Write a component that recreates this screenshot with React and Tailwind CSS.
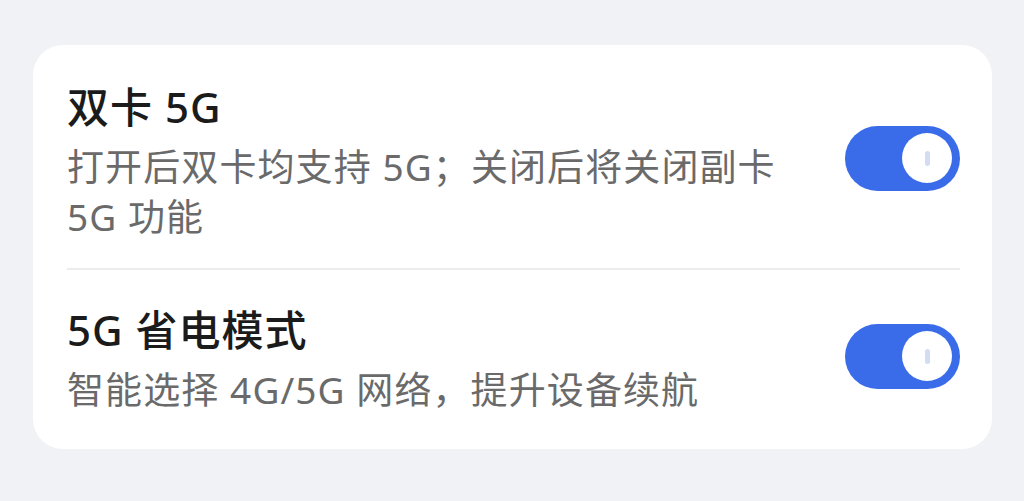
import React from "react";

const FONT = { fontFamily: '"Noto Sans", "Noto Sans CJK SC", sans-serif' };

function Toggle() {
  return (
    <div className="mb-[9px] flex h-[65px] w-[115px] shrink-0 items-center justify-end rounded-full bg-[#3a6cea] pr-[8px]">
      <div className="flex h-[50px] w-[50px] items-center justify-center rounded-full bg-white">
        <div className="h-[15px] w-[5px] rounded-full bg-[#d3dcf3]" />
      </div>
    </div>
  );
}

function Row({ title, desc, className }) {
  return (
    <div className={`flex items-center ${className}`}>
      <div className="min-w-0 flex-1 pr-[40px]">
        <div className="text-[42px] font-medium leading-[48px] tracking-[1px] text-[#1b1b1b]">{title}</div>
        <div className="mt-[11px] text-[37px] leading-[50px] tracking-[1.1px] text-[#6a6a6a]">{desc}</div>
      </div>
      <Toggle />
    </div>
  );
}

export default function App() {
  return (
    <div className="h-[501px] w-[1024px] bg-[#f1f2f6] pl-[33px] pr-[32px] pt-[45px]" style={FONT}>
      <div className="rounded-[30px] bg-white pl-[34px] pr-[32px]">
        <Row
          className="pt-[38px] pb-[26px]"
          title="双卡 5G"
          desc="打开后双卡均支持 5G；关闭后将关闭副卡 5G 功能"
        />
        <div className="h-[2px] bg-[#ececee]" />
        <Row
          className="pt-[36px] pb-[34px]"
          title="5G 省电模式"
          desc="智能选择 4G/5G 网络，提升设备续航"
        />
      </div>
    </div>
  );
}
